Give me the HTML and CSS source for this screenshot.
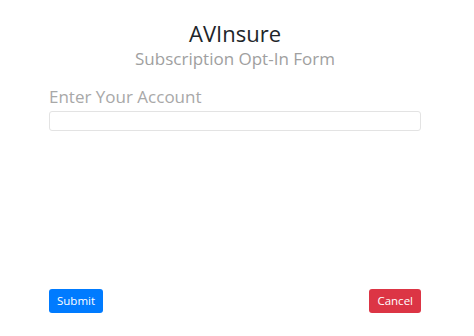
FILE: index.html
```html
<!DOCTYPE html>
<html>
<head>
<meta charset="utf-8">
<link rel="stylesheet" href="styles.css">
</head>
<body>
<div class="page">
  <div class="header">
    <h1 class="title">AVInsure</h1>
    <h2 class="subtitle">Subscription Opt-In Form</h2>
  </div>
  <div class="field">
    <label class="label">Enter Your Account</label>
    <input class="input" type="text">
  </div>
  <div class="actions">
    <button class="btn btn-primary">Submit</button>
    <button class="btn btn-danger">Cancel</button>
  </div>
</div>
</body>
</html>
```
FILE: styles.css
```css
html, body {
  margin: 0;
  padding: 0;
  background: #fff;
}
body {
  font-family: "Open Sans", "Noto Sans", sans-serif;
}
.page {
  width: 372px;
  margin-left: 49px;
  height: 336px;
  display: flex;
  flex-direction: column;
}
.header {
  text-align: center;
  padding-top: 19px;
}
.title {
  margin: 0;
  font-size: 22px;
  font-weight: 400;
  line-height: 28px;
  color: #212529;
}
.subtitle {
  margin: 0;
  font-size: 17px;
  font-weight: 400;
  line-height: 24px;
  color: #a0a0a0;
}
.field {
  margin-top: 15px;
  display: flex;
  flex-direction: column;
}
.label {
  font-size: 17px;
  line-height: 22px;
  color: #a8a8a8;
  margin-bottom: 3px;
}
.input {
  box-sizing: border-box;
  height: 20px;
  border: 1px solid #e3e3e3;
  border-radius: 3px;
  margin: 0;
  padding: 0 6px;
  outline: none;
}
.actions {
  margin-top: auto;
  margin-bottom: 23px;
  display: flex;
  justify-content: space-between;
}
.btn {
  font-family: "Open Sans", "Noto Sans", sans-serif;
  font-size: 11.5px;
  line-height: 16px;
  height: 24px;
  padding: 0 8px;
  border: none;
  border-radius: 3px;
  color: #fff;
}
.btn-primary {
  background: #007bff;
}
.btn-danger {
  background: #dc3545;
}
```
